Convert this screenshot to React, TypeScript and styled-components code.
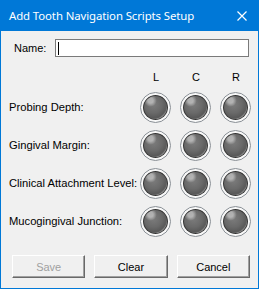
import React from 'react';
import styled, { createGlobalStyle } from 'styled-components';

const GlobalStyle = createGlobalStyle`
  html, body {
    margin: 0;
    padding: 0;
    background: #f0f0f0;
  }
`;

const rows = [
  'Probing Depth:',
  'Gingival Margin:',
  'Clinical Attachment Level:',
  'Mucogingival Junction:',
];

const App = () => {
  return (
    <Window>
      <GlobalStyle />
      <TitleBar>
        <Title>Add Tooth Navigation Scripts Setup</Title>
        <Close>
          <svg width="10" height="10" viewBox="0 0 10 10">
            <path d="M0.5 0.5 L9.5 9.5 M9.5 0.5 L0.5 9.5" stroke="#fff" strokeWidth="1.2" />
          </svg>
        </Close>
      </TitleBar>
      <Body>
        <NameRow>
          <Label>Name:</Label>
          <NameInput>
            <Caret />
          </NameInput>
        </NameRow>
        <Grid>
          <span />
          <ColHead>L</ColHead>
          <ColHead>C</ColHead>
          <ColHead>R</ColHead>
          {rows.map((r) => (
            <React.Fragment key={r}>
              <RowLabel>{r}</RowLabel>
              <Cell><Knob /></Cell>
              <Cell><Knob /></Cell>
              <Cell><Knob /></Cell>
            </React.Fragment>
          ))}
        </Grid>
        <Buttons>
          <Button disabled>Save</Button>
          <Button>Clear</Button>
          <Button>Cancel</Button>
        </Buttons>
      </Body>
    </Window>
  );
};

export default App;

const Window = styled.div`
  width: 259px;
  height: 289px;
  box-sizing: border-box;
  border: 1px solid #0078d7;
  border-top: none;
  background: #f0f0f0;
  display: flex;
  flex-direction: column;
  font-family: 'Liberation Sans', Arial, sans-serif;
  font-size: 11px;
  color: #000;
`;

const TitleBar = styled.div`
  height: 31px;
  margin: 0 -1px;
  background: #0078d7;
  display: flex;
  align-items: center;
  justify-content: space-between;
  padding: 0 12px 0 9px;
`;

const Title = styled.div`
  color: #fff;
  font-family: 'Noto Sans', 'Open Sans', sans-serif;
  font-size: 11.4px;
  letter-spacing: -0.1px;
`;

const Close = styled.div`
  display: flex;
  align-items: center;
  width: 10px;
  height: 10px;
  margin-top: 1px;
`;

const Body = styled.div`
  flex: 1;
  display: flex;
  flex-direction: column;
  padding: 8px 8px 0 8px;
`;

const NameRow = styled.div`
  display: flex;
  align-items: center;
  height: 18px;
  margin-bottom: 9px;
`;

const Label = styled.span`
  width: 46px;
  padding-left: 5px;
  box-sizing: border-box;
`;

const NameInput = styled.div`
  flex: 1;
  height: 18px;
  box-sizing: border-box;
  background: #fff;
  border: 1px solid #7a7a7a;
  margin-right: 1px;
  display: flex;
  align-items: center;
  padding-left: 2px;
`;

const Caret = styled.div`
  width: 1px;
  height: 13px;
  background: #000;
`;

const Grid = styled.div`
  display: grid;
  grid-template-columns: 126px repeat(3, 40px);
  grid-template-rows: 22px repeat(4, 38px);
  align-items: center;
`;

const ColHead = styled.div`
  text-align: center;
  margin-left: 2px;
`;

const RowLabel = styled.div`
  white-space: nowrap;
  font-size: 11.2px;
`;

const Cell = styled.div`
  display: flex;
  justify-content: center;
`;

const Knob = styled.div`
  width: 31px;
  height: 31px;
  box-sizing: border-box;
  border-radius: 50%;
  border: 1px solid #8a9096;
  background: #f8f8f8;
  padding: 2px;
  display: flex;

  &::before {
    content: '';
    flex: 1;
    border-radius: 50%;
    background:
      radial-gradient(circle at 30% 22%, rgba(255, 255, 255, 0.45) 0 10%, transparent 24%),
      radial-gradient(circle at 42% 38%, #7c7c7c 0%, #6a6a6a 40%, #575757 65%, #2a2a2a 88%, #151515 100%);
    box-shadow: inset 0 0 0 1px #333, inset -2px -2px 1px -1px #9a9a9a;
  }
`;

const Buttons = styled.div`
  display: flex;
  gap: 9px;
  margin-top: 15px;
  padding-left: 3px;
`;

const Button = styled.button`
  width: 75px;
  height: 23px;
  box-sizing: border-box;
  background: #f0f0f0;
  border: 1px solid;
  border-color: #fff #696969 #696969 #fff;
  box-shadow: inset -1px -1px 0 #a0a0a0;
  font-family: 'Liberation Sans', Arial, sans-serif;
  font-size: 11px;
  color: #000;
  padding: 0;

  &:disabled {
    color: #a0a0a0;
  }
`;
